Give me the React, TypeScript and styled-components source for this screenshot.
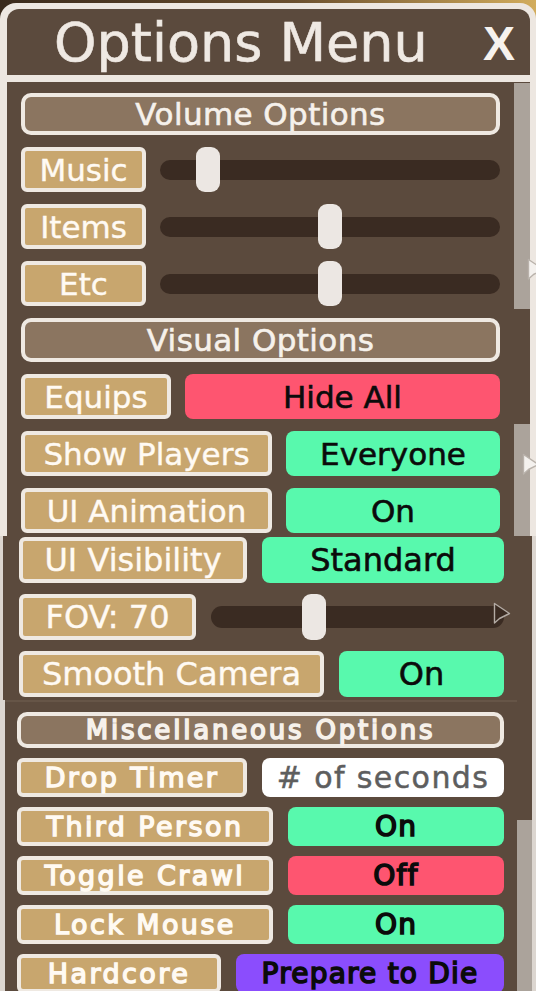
import React from "react";
import styled, { createGlobalStyle } from "styled-components";

// Options menu (stitched in three scroll positions, like the capture)

type Tone = "green" | "red" | "purple" | "white";

type Item =
  | { kind: "header"; text: string; h: number }
  | { kind: "toggle"; label: string; w: number; value: string; tone: Tone }
  | { kind: "slider"; label: string; w: number; pos: number; cursor?: boolean };

interface Look {
  rowH: number;
  gap: number;
  labelSize: number;
  valueSize: number;
  headerSize: number;
  stroke: number;
  ls: number;
  border: number;
  split: number;
  trackH: number;
}

const TONES: Record<Tone, { bg: string; fg: string }> = {
  green: { bg: "#58f9ad", fg: "#0b0b0b" },
  red: { bg: "#fe5570", fg: "#0b0b0b" },
  purple: { bg: "#8b4dfd", fg: "#0b0b0b" },
  white: { bg: "#ffffff", fg: "#5e5e5e" },
};

const GlobalStyle = createGlobalStyle`
  html, body {
    margin: 0;
    padding: 0;
  }
  body {
    width: 536px;
    height: 991px;
    overflow: hidden;
    background: linear-gradient(90deg, #3a2a1c 0%, #6b4f2e 55%, #d2ac5c 100%);
    font-family: "DejaVu Sans", "Noto Sans", sans-serif;
  }
`;

const Frame = styled.div`
  margin-top: 3px;
  height: 988px;
  background: #ede7e1;
  border-radius: 16px 16px 0 0;
  display: flex;
  flex-direction: column;
  overflow: hidden;
`;

const TitleBar = styled.div`
  margin: 6px 6px 7px 7px;
  height: 66px;
  flex-shrink: 0;
  background: #5b4a3d;
  border-radius: 12px 12px 0 0;
  display: flex;
  align-items: center;
  justify-content: space-between;
  padding: 0 15px 0 47px;
`;

const Title = styled.h1`
  margin: 0;
  font-size: 54px;
  font-weight: 400;
  color: #efe9e3;
  white-space: nowrap;
  -webkit-text-stroke: 0.6px #efe9e3;
`;

const Close = styled.div`
  font-family: "Liberation Sans", Arial, sans-serif;
  font-weight: 700;
  font-size: 48px;
  color: #f6f2ee;
  margin-top: 2px;
`;

const Segment = styled.div<{ $h: number; $l: number; $r: number; $edge: string }>`
  height: ${(p) => p.$h}px;
  flex-shrink: 0;
  display: flex;
  position: relative;
  overflow: hidden;
  background: ${(p) => p.$edge};
  padding: 0 ${(p) => p.$r}px 0 ${(p) => p.$l}px;
`;

const Content = styled.div<{ $pad: string; $gap: number; $line?: boolean }>`
  flex: 1;
  display: flex;
  flex-direction: column;
  gap: ${(p) => p.$gap}px;
  padding: ${(p) => p.$pad};
  background: #5b4a3d;
  border-top: ${(p) => (p.$line ? "2px solid #665547" : "none")};
`;

const Gutter = styled.div<{ $w: number }>`
  width: ${(p) => p.$w}px;
  position: relative;
  background: #5b4a3d;
`;

const Thumb = styled.div<{ $top: number; $h: number }>`
  position: absolute;
  left: 0;
  right: 0;
  top: ${(p) => p.$top}px;
  height: ${(p) => p.$h}px;
  background: #aba39b;
`;

const Header = styled.div<{ $h: number; $size: number; $stroke: number; $ls: number; $b: number }>`
  height: ${(p) => p.$h}px;
  flex-shrink: 0;
  box-sizing: border-box;
  background: #8b7560;
  border: ${(p) => p.$b}px solid #efe9e2;
  border-radius: 10px;
  display: flex;
  align-items: center;
  justify-content: center;
  color: #f6f1eb;
  font-size: ${(p) => p.$size}px;
  -webkit-text-stroke: ${(p) => p.$stroke}px #f6f1eb;
  letter-spacing: ${(p) => p.$ls}px;
  white-space: nowrap;
`;

const Row = styled.div<{ $h: number; $gap: number }>`
  height: ${(p) => p.$h}px;
  flex-shrink: 0;
  display: flex;
  gap: ${(p) => p.$gap}px;
`;

const Label = styled.div<{ $w: number; $size: number; $stroke: number; $ls: number; $b: number }>`
  width: ${(p) => p.$w}px;
  flex-shrink: 0;
  box-sizing: border-box;
  background: #c8a66e;
  border: ${(p) => p.$b}px solid #efe9e2;
  border-radius: 6px;
  display: flex;
  align-items: center;
  justify-content: center;
  color: #fffaf3;
  font-size: ${(p) => p.$size}px;
  -webkit-text-stroke: ${(p) => p.$stroke}px #fffaf3;
  letter-spacing: ${(p) => p.$ls}px;
  white-space: nowrap;
`;

const Value = styled.div<{ $tone: Tone; $size: number; $stroke: number; $ls: number }>`
  flex: 1;
  border-radius: 8px;
  background: ${(p) => TONES[p.$tone].bg};
  color: ${(p) => TONES[p.$tone].fg};
  display: flex;
  align-items: center;
  justify-content: center;
  font-size: ${(p) => (p.$tone === "white" ? p.$size + 2 : p.$size)}px;
  -webkit-text-stroke: ${(p) => (p.$tone === "white" ? 0.5 : p.$stroke)}px ${(p) => TONES[p.$tone].fg};
  letter-spacing: ${(p) => (p.$tone === "white" ? 1.4 : p.$ls)}px;
  white-space: nowrap;
`;

const Slider = styled.div`
  flex: 1;
  position: relative;
  display: flex;
  align-items: center;
`;

const Track = styled.div<{ $h: number }>`
  width: 100%;
  height: ${(p) => p.$h}px;
  border-radius: ${(p) => p.$h / 2}px;
  background: #3a2b22;
`;

const Knob = styled.div<{ $pos: number }>`
  position: absolute;
  top: 0;
  bottom: 0;
  width: 24px;
  left: calc((100% - 24px) * ${(p) => p.$pos});
  border-radius: 9px;
  background: #ece7e3;
`;

const Pointer = styled.svg<{ $x: number; $y: number }>`
  position: absolute;
  left: ${(p) => p.$x}px;
  top: ${(p) => p.$y}px;
  pointer-events: none;
`;

const Arrow = ({ x, y, fill, stroke }: { x: number; y: number; fill: string; stroke: string }) => (
  <Pointer $x={x} $y={y} width="20" height="26" viewBox="0 0 20 26">
    <path d="M1.5 1.5 L1.5 21 L6.5 16.5 L16.5 11.5 Z" fill={fill} stroke={stroke} strokeWidth="1.4" strokeLinejoin="round" />
  </Pointer>
);

const Rows = ({ items, look }: { items: Item[]; look: Look }) => (
  <>
    {items.map((it, i) => {
      if (it.kind === "header") {
        return (
          <Header key={i} $h={it.h} $size={look.headerSize} $stroke={look.stroke + 0.2} $ls={look.ls + 0.4} $b={look.border}>
            {it.text}
          </Header>
        );
      }
      const label = (
        <Label $w={it.w} $size={look.labelSize} $stroke={look.stroke} $ls={look.ls} $b={look.border}>
          {it.label}
        </Label>
      );
      if (it.kind === "slider") {
        return (
          <Row key={i} $h={look.rowH} $gap={look.split}>
            {label}
            <Slider>
              <Track $h={look.trackH} />
              <Knob $pos={it.pos} />
              {it.cursor && <Arrow x={282} y={8} fill="#3a2b22" stroke="#b3aba4" />}
            </Slider>
          </Row>
        );
      }
      return (
        <Row key={i} $h={look.rowH} $gap={look.split}>
          {label}
          <Value $tone={it.tone} $size={look.valueSize} $stroke={look.stroke + 0.2} $ls={look.ls * 0.5}>
            {it.value}
          </Value>
        </Row>
      );
    })}
  </>
);

const topLook: Look = {
  rowH: 45, gap: 12, labelSize: 31, valueSize: 31, headerSize: 31,
  stroke: 0.4, ls: 0, border: 4, split: 14, trackH: 20,
};

const midLook: Look = {
  rowH: 46, gap: 11, labelSize: 32, valueSize: 32, headerSize: 30,
  stroke: 0.4, ls: 0, border: 4, split: 15, trackH: 22,
};

const lowLook: Look = {
  rowH: 39, gap: 10, labelSize: 27, valueSize: 28, headerSize: 26,
  stroke: 1.4, ls: 2.4, border: 4, split: 15, trackH: 20,
};

const topItems: Item[] = [
  { kind: "header", text: "Volume Options", h: 42 },
  { kind: "slider", label: "Music", w: 125, pos: 0.114 },
  { kind: "slider", label: "Items", w: 125, pos: 0.5 },
  { kind: "slider", label: "Etc", w: 125, pos: 0.5 },
  { kind: "header", text: "Visual Options", h: 44 },
  { kind: "toggle", label: "Equips", w: 150, value: "Hide All", tone: "red" },
  { kind: "toggle", label: "Show Players", w: 251, value: "Everyone", tone: "green" },
  { kind: "toggle", label: "UI Animation", w: 251, value: "On", tone: "green" },
];

const midItems: Item[] = [
  { kind: "toggle", label: "UI Visibility", w: 228, value: "Standard", tone: "green" },
  { kind: "slider", label: "FOV: 70", w: 177, pos: 0.34, cursor: true },
  { kind: "toggle", label: "Smooth Camera", w: 305, value: "On", tone: "green" },
];

const lowItems: Item[] = [
  { kind: "header", text: "Miscellaneous Options", h: 36 },
  { kind: "toggle", label: "Drop Timer", w: 230, value: "# of seconds", tone: "white" },
  { kind: "toggle", label: "Third Person", w: 256, value: "On", tone: "green" },
  { kind: "toggle", label: "Toggle Crawl", w: 256, value: "Off", tone: "red" },
  { kind: "toggle", label: "Lock Mouse", w: 256, value: "On", tone: "green" },
  { kind: "toggle", label: "Hardcore", w: 204, value: "Prepare to Die", tone: "purple" },
];

export default function App() {
  return (
    <>
      <GlobalStyle />
      <Frame>
        <TitleBar>
          <Title>Options Menu</Title>
          <Close>X</Close>
        </TitleBar>

        <Segment $h={454} $l={7} $r={6} $edge="#ede7e1">
          <Content $pad="11px 14px 0 14px" $gap={topLook.gap}>
            <Rows items={topItems} look={topLook} />
          </Content>
          <Gutter $w={16}>
            <Thumb $top={1} $h={226} />
            <Thumb $top={342} $h={120} />
          </Gutter>
          <Arrow x={527} y={176} fill="#f4f1ee" stroke="#b9b2ab" />
          <Arrow x={522} y={371} fill="#f4f1ee" stroke="#b9b2ab" />
        </Segment>

        <Segment $h={164} $l={3} $r={4} $edge="#dcd6d0">
          <Content $pad="1px 28px 0 16px" $gap={midLook.gap}>
            <Rows items={midItems} look={midLook} />
          </Content>
        </Segment>

        <Segment $h={291} $l={5} $r={4} $edge="#dcd6d0">
          <Content $pad="10px 13px 0 12px" $gap={lowLook.gap} $line>
            <Rows items={lowItems} look={lowLook} />
          </Content>
          <Gutter $w={15}>
            <Thumb $top={120} $h={200} />
          </Gutter>
        </Segment>
      </Frame>
    </>
  );
}
